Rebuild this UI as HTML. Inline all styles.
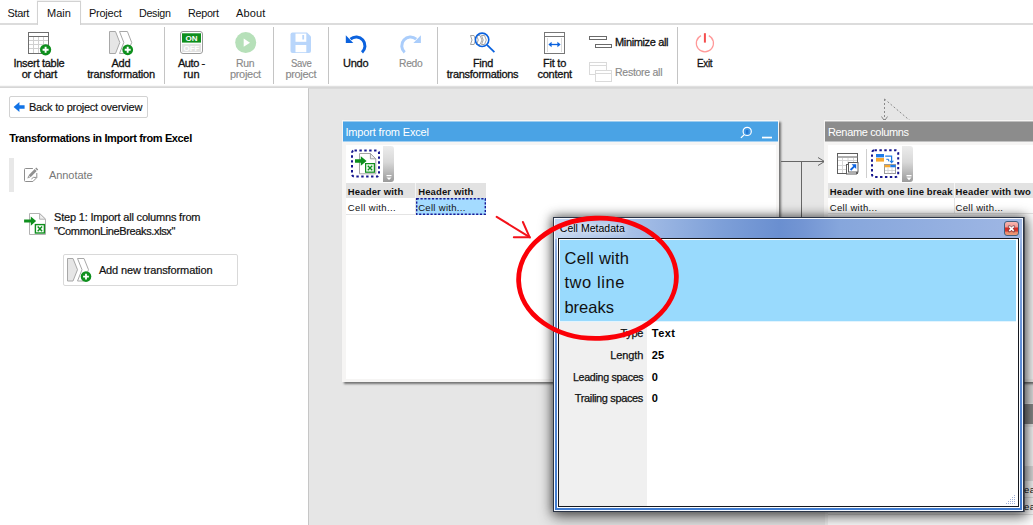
<!DOCTYPE html>
<html lang="en">
<head>
<meta charset="utf-8">
<title>Import from Excel - Cell Metadata</title>
<style>
html,body{margin:0;padding:0;}
body{width:1033px;height:525px;position:relative;overflow:hidden;background:#fff;font-family:"Liberation Sans",sans-serif;}
.a{position:absolute;box-sizing:border-box;}
.t{position:absolute;white-space:pre;font-family:"Liberation Sans",sans-serif;}
svg{position:absolute;left:0;top:0;overflow:visible;}
.sep{position:absolute;width:1px;top:27px;height:57px;background:#c4c4c4;}
</style>
</head>
<body>
<!-- ===== tab bar ===== -->
<div class="a" style="left:0;top:23px;width:1033px;height:2px;background:#dcdcdc;"></div>
<div class="a" style="left:37px;top:1px;width:44px;height:24px;background:#fff;border:1px solid #d2d2d2;border-bottom:none;box-shadow:0 -1px 1px rgba(0,0,0,.05);"></div>

<!-- ===== ribbon ===== -->
<div class="sep" style="left:164px;"></div>
<div class="sep" style="left:273px;"></div>
<div class="sep" style="left:328px;"></div>
<div class="sep" style="left:437px;"></div>
<div class="sep" style="left:677px;"></div>
<div class="a" style="left:0;top:85px;width:1033px;height:3px;background:linear-gradient(#f8f8f8 1px,#e0e0e0 1px,#e0e0e0 2px,#d6d6d6 2px);"></div>

<!-- ===== canvas ===== -->
<div class="a" style="left:308px;top:88px;width:725px;height:437px;background:#e6e6e6;border-left:1px solid #c6c6c6;border-top:1px solid #dadada;"></div>

<!-- ===== left panel ===== -->
<div class="a" style="left:9px;top:96px;width:139px;height:22px;border:1px solid #d2d2d2;border-radius:2px;background:#fff;"></div>
<div class="a" style="left:9px;top:158px;width:5px;height:34px;background:#e8e8e8;"></div>
<div class="a" style="left:63px;top:254px;width:175px;height:32px;border:1px solid #d9d9d9;border-radius:2px;background:#fff;"></div>

<!-- ===== Import from Excel window ===== -->
<div class="a" style="left:342px;top:120px;width:437px;height:262px;background:#f6f5f4;box-shadow:2px 2px 2px rgba(0,0,0,.5);"></div>
<div class="a" style="left:343px;top:121px;width:435px;height:21px;background:linear-gradient(#9ccbee 1px,#4aa3e5 1px,#4aa3e5 20px,#a3d0f2 20px);"></div>
<div class="a" style="left:346px;top:145px;width:430px;height:234px;background:#fff;"></div>
<!-- toolbar handle -->
<div class="a" style="left:383px;top:146px;width:11px;height:36px;border-radius:0 3px 3px 0;background:linear-gradient(#ececec,#d8d8d8 45%,#9a9a9a);"></div>
<!-- grid -->
<div class="a" style="left:346px;top:183px;width:140px;height:15px;background:#e2e2e2;"></div>
<div class="a" style="left:415px;top:183px;width:1px;height:15px;background:#f4f4f4;"></div>
<div class="a" style="left:346px;top:214px;width:140px;height:1px;background:#e4e4e4;"></div>
<div class="a" style="left:415px;top:198px;width:1px;height:16px;background:#e4e4e4;"></div>
<div class="a" style="left:416px;top:198px;width:70px;height:17px;background:#a4dbff;"></div>
<svg width="1033" height="525" viewBox="0 0 1033 525"><rect x="416.7" y="198.7" width="68.6" height="15.6" fill="none" stroke="#1a1a96" stroke-width="1.4" stroke-dasharray="2.2 1.6"/></svg>

<!-- ===== connectors ===== -->
<svg width="1033" height="525" viewBox="0 0 1033 525">
  <g fill="none" stroke="#666" stroke-width="1">
    <path d="M781 161.5H824"/>
    <path d="M818 157.5L824.5 161.5L818 165.5"/>
    <path d="M801.5 161.5V240"/>
  </g>
  <g fill="none" stroke="#8a8a8a" stroke-width="1" stroke-dasharray="2 2">
    <path d="M884.5 99V120"/>
    <path d="M884.5 99L911 121.5"/>
  </g>
  <path d="M881.5 116.5L884.5 121L887.5 116.5" fill="none" stroke="#8a8a8a" stroke-width="1"/>
</svg>

<!-- ===== Rename columns window ===== -->
<div class="a" style="left:824px;top:120px;width:221px;height:262px;background:#f6f5f4;box-shadow:2px 2px 2px rgba(0,0,0,.5);"></div>
<div class="a" style="left:825px;top:121px;width:220px;height:21px;background:linear-gradient(#bdbdbd 1px,#8c8c8c 1px,#8c8c8c 20px,#c2c2c2 20px);"></div>
<div class="a" style="left:828px;top:145px;width:215px;height:234px;background:#fff;"></div>
<div class="a" style="left:866px;top:149px;width:1px;height:29px;background:#cfcfcf;"></div>
<div class="a" style="left:902px;top:146px;width:11px;height:36px;border-radius:0 3px 3px 0;background:linear-gradient(#ececec,#d8d8d8 45%,#9a9a9a);"></div>
<div class="a" style="left:828px;top:183px;width:210px;height:15px;background:#e2e2e2;"></div>
<div class="a" style="left:954px;top:183px;width:1px;height:15px;background:#f4f4f4;"></div>
<div class="a" style="left:828px;top:213px;width:210px;height:1px;background:#e4e4e4;"></div>
<div class="a" style="left:954px;top:198px;width:1px;height:16px;background:#e4e4e4;"></div>
<!-- third window (mostly hidden behind the dialog) -->
<div class="a" style="left:825px;top:403px;width:220px;height:140px;background:#f1f1f1;"></div>
<div class="a" style="left:825px;top:404px;width:220px;height:20px;background:#8c8c8c;"></div>
<div class="a" style="left:828px;top:427px;width:215px;height:110px;background:#fff;"></div>
<div class="a" style="left:828px;top:466px;width:210px;height:15px;background:#e2e2e2;"></div>
<div class="a" style="left:828px;top:497px;width:210px;height:1px;background:#e4e4e4;"></div>
<div class="a" style="left:828px;top:514px;width:210px;height:1px;background:#e4e4e4;"></div>

<!-- ===== icons ===== -->
<svg width="1033" height="525" viewBox="0 0 1033 525">
<!-- tab/ribbon icons -->
<!-- Insert table -->
<g>
  <rect x="28.5" y="32.5" width="20" height="21" fill="#fff" stroke="#6e6e6e"/>
  <path d="M28.5 36.5H48.5" stroke="#6e6e6e" fill="none"/>
  <path d="M33.5 37V53M38.5 37V53M43.5 37V53M29 40.5H48M29 44.5H48M29 48.5H48" stroke="#d0d0d0" fill="none"/>
  <circle cx="45.6" cy="49.8" r="5.6" fill="#0e8f1d"/>
  <path d="M42.6 49.8H48.6M45.6 46.8V52.8" stroke="#fff" stroke-width="1.9" fill="none"/>
</g>
<!-- Add transformation -->
<g>
  <path d="M109.5 31.5H115.5L119.8 42.5L115.5 53.5H109.5Z" fill="#e6e6e6" stroke="#a8a8a8"/>
  <path d="M119.5 31.5H127.4L131.7 42.5L127.4 53.5H119.5L123.8 42.5Z" fill="#fff" stroke="#a8a8a8"/>
  <circle cx="127.7" cy="49.8" r="5.4" fill="#0e8f1d"/>
  <path d="M124.7 49.8H130.7M127.7 46.8V52.8" stroke="#fff" stroke-width="1.9" fill="none"/>
</g>
<!-- Auto-run -->
<g>
  <rect x="180.5" y="31.5" width="22" height="22" rx="2.5" fill="#fff" stroke="#9a9a9a"/>
  <rect x="182" y="33.3" width="19" height="9.3" fill="#0e8f1d"/>
  <rect x="182" y="43.9" width="19" height="8.1" fill="#e2e2e2"/>
  <text x="191.5" y="41.2" font-family="Liberation Sans, sans-serif" font-size="8" font-weight="700" fill="#fff" text-anchor="middle">ON</text>
  <text x="191.5" y="51" font-family="Liberation Sans, sans-serif" font-size="8" font-weight="700" fill="#fff" text-anchor="middle">OFF</text>
</g>
<!-- Run project -->
<g>
  <circle cx="245.7" cy="42.6" r="10.5" fill="#b6e0b9"/>
  <path d="M243.7 38.6V46.8L250 42.7Z" fill="#fff"/>
</g>
<!-- Save project -->
<g>
  <path d="M292.5 32.5H307L311 36.5V51Q311 53 309 53H292.5Q290.5 53 290.5 51V34.5Q290.5 32.5 292.5 32.5Z" fill="#b9d6fb"/>
  <rect x="295.5" y="33.6" width="10.8" height="8.2" fill="#fff"/>
  <rect x="302.3" y="35" width="1.8" height="4.5" fill="#b9d6fb"/>
  <rect x="295.5" y="45" width="10.8" height="7.2" fill="#fff"/>
</g>
<!-- Undo -->
<g>
  <path d="M350.5 39.2A8.3 8.3 0 1 1 362 52.3" fill="none" stroke="#0b62de" stroke-width="3"/>
  <path d="M345.8 35.2V42.9H353.3Z" fill="#0b62de"/>
</g>
<!-- Redo -->
<g>
  <path d="M416.2 39.2A8.3 8.3 0 1 0 404.7 52.3" fill="none" stroke="#aacdfb" stroke-width="3"/>
  <path d="M420.9 35.2V42.9H413.4Z" fill="#aacdfb"/>
</g>
<!-- Find transformations -->
<g>
  <path d="M470.5 35.5H474L475.5 40L474 44.5H470.5L472 40Z" fill="#fff" stroke="#9a9a9a" stroke-width="0.9"/>
  <path d="M476.5 35.5H480L482 40L480 44.5H476.5L478.3 40Z" fill="#fff" stroke="#9a9a9a" stroke-width="0.9"/>
  <path d="M481.5 35.5H484.5L486.3 40L484.5 44.5H481.5L483.2 40Z" fill="#fff" stroke="#9a9a9a" stroke-width="0.9"/>
  <circle cx="482.1" cy="39.8" r="6.7" fill="none" stroke="#0b62de" stroke-width="1.6"/>
  <path d="M487 44.9L494.4 52.2" stroke="#0b62de" stroke-width="1.8" fill="none"/>
</g>
<!-- Fit to content -->
<g>
  <rect x="544.5" y="32.5" width="20" height="21" fill="#fff" stroke="#777"/>
  <path d="M544.5 36.5H564.5" stroke="#777" fill="none"/>
  <path d="M547.5 38V52M561.5 38V52" stroke="#dcdcdc" fill="none"/>
  <path d="M549.5 44.5H559.5" stroke="#0b62de" stroke-width="1.3" fill="none"/>
  <path d="M551.6 41.8L548.4 44.5L551.6 47.2ZM557.4 41.8L560.6 44.5L557.4 47.2Z" fill="#0b62de"/>
</g>
<!-- Minimize all -->
<g fill="#fff" stroke="#6a6a6a">
  <rect x="589.5" y="36.5" width="17" height="3"/>
  <rect x="595.5" y="44.5" width="16" height="3"/>
</g>
<!-- Restore all -->
<g fill="#fff" stroke="#dadada">
  <rect x="589.5" y="62.5" width="17" height="12"/>
  <path d="M589.5 65.5H606.5" fill="none"/>
  <rect x="595.5" y="70.5" width="16" height="11"/>
  <path d="M595.5 73.5H611.5" fill="none"/>
</g>
<!-- Exit -->
<g fill="none">
  <path d="M701 35.6A8.6 8.6 0 1 0 708.8 35.6" stroke="#f99" stroke-width="1.2"/>
  <path d="M704.9 33.2V42.6" stroke="#f44d4d" stroke-width="2"/>
</g>
<!-- Back arrow -->
<path d="M13.6 107L19.4 102V105.2H24.6V108.8H19.4V112Z" fill="#1273e6"/>
<!-- Annotate -->
<g fill="none" stroke="#8e8e8e" stroke-width="1">
  <path d="M32.9 168.500H25.500Q24.500 168.500 24.500 169.500V180.500Q24.500 181.500 25.500 181.500H32.900L36.800 177.600V173"/>
  <path d="M31.400 179Q32.800 176.600 36.600 177.400"/>
</g>
<path d="M28.600 175.200L34.700 169.100L36.700 171.100L30.600 177.200Z" fill="#909090"/>
<path d="M27.300 178.400L28.300 175.600L30.200 177.500Z" fill="#a0a0a0"/>
<path d="M35.300 168.500L36.200 167.600L38.200 169.600L37.300 170.500Z" fill="#8a8a8a"/>
<!-- Step icon -->
<g>
  <path d="M29.500 213.500H39.600L45.500 219.200V234.500H29.500Z" fill="#fff" stroke="#b2b2b2"/>
  <path d="M39.600 213.500V219.200H45.500Z" fill="#f0f0f0" stroke="#b2b2b2"/>
  <path d="M24.100 219.600H30.800V216.600L36.100 221.100L30.800 225.800V222.600H24.100Z" fill="#0e8f1d"/>
  <rect x="35.400" y="224.600" width="9" height="8.400" fill="#fff" stroke="#0e8f1d" stroke-width="1.400"/>
  <path d="M37.700 226.600L42.100 231.200M42.100 226.600L37.700 231.200" stroke="#0e8f1d" stroke-width="1.500" fill="none"/>
</g>
<!-- Add new transformation button icon -->
<g>
  <path d="M67.5 258.5H73L77.5 269.7L73 281H67.5Z" fill="#e6e6e6" stroke="#a8a8a8"/>
  <path d="M77.5 258.5H84L88.5 269.7L84 281H77.5L82 269.7Z" fill="#fff" stroke="#a8a8a8"/>
  <circle cx="86" cy="276.600" r="5.3" fill="#0e8f1d"/>
  <path d="M83.1 276.600H88.9M86 273.700V279.500" stroke="#fff" stroke-width="1.8" fill="none"/>
</g>
<!-- Import window: title icons -->
<g fill="none" stroke="#fff" stroke-width="1.2">
  <circle cx="747.2" cy="131.4" r="4.1" fill="#3f96e2"/>
  <path d="M744.3 134.6L740.9 137.9" stroke-width="1.3"/>
</g>
<path d="M746 133.800V130.600Q747.200 129 748.400 130.600V133.800Z" fill="#2274d0"/>
<rect x="762" y="136.700" width="10" height="1.700" fill="#fff"/>
<!-- Import window: toolbar icon -->
<g>
  <rect x="352" y="150.400" width="27" height="26.200" rx="2.5" fill="none" stroke="#16168e" stroke-width="2" stroke-dasharray="2.4 2.5"/>
  <path d="M359.500 153.500H370.400L375.800 158.800V173.800H359.500Z" fill="#fff" stroke="#a4a4a4"/>
  <path d="M370.400 153.500V158.800H375.800Z" fill="#f0f0f0" stroke="#a4a4a4"/>
  <path d="M355 159.300H360.800V156.200L366.600 161L360.800 165.800V162.700H355Z" fill="#0e8f1d"/>
  <rect x="365.6" y="163.6" width="8.8" height="8.6" fill="#e9f6ea" stroke="#0e8f1d" stroke-width="1.2"/>
  <path d="M367.8 165.8L372.2 170.2M372.2 165.8L367.8 170.2" stroke="#0e8f1d" stroke-width="1.3" fill="none"/>
  <rect x="386.5" y="175" width="5" height="1.2" fill="#fff"/>
  <path d="M386.5 177.4H391.5L389 180Z" fill="#fff"/>
</g>
<!-- Rename window: toolbar icons -->
<g>
  <rect x="837.5" y="153.5" width="20" height="20" fill="#fff" stroke="#5e5e5e"/>
  <path d="M837.5 157H857.5" stroke="#8a8a8a" stroke-width="1.4" fill="none"/>
  <path d="M842.5 158V173M848 158V173M853.5 158V173M838 160.5H857M838 165.5H857M838 169.500H857" stroke="#d6d6d6" fill="none"/>
  <rect x="846.500" y="164.5" width="10" height="9.500" fill="#fff" stroke="#5e5e5e"/>
  <rect x="848.5" y="162.5" width="9.500" height="9.500" fill="#fff" stroke="#5e5e5e"/>
  <path d="M850.6 170L855.2 165.4" stroke="#0b62de" stroke-width="1.8" fill="none"/>
  <path d="M851.6 164.3H856.2V168.9Z" fill="#0b62de"/>
  <rect x="872" y="150.3" width="26.2" height="26.600" rx="2.5" fill="none" stroke="#16168e" stroke-width="2" stroke-dasharray="2.4 2.5"/>
  <rect x="876" y="154" width="8" height="3.4" fill="#1f7be6"/>
  <rect x="876" y="158" width="8" height="3.600" fill="#f8a830"/>
  <path d="M885.2 156.200H891.6V161.500" stroke="#1f7be6" stroke-width="1.2" fill="none"/>
  <path d="M889.2 160.800H894L891.6 163.600Z" fill="#1f7be6"/>
  <path d="M886.300 159.300H888.6V161.300" stroke="#1f7be6" stroke-width="1" fill="none"/>
  <rect x="884.5" y="164.5" width="11" height="9" fill="#fff" stroke="#9a9a9a"/>
  <rect x="884.5" y="165" width="5.800" height="2.300" fill="#f8a830"/>
  <rect x="890.300" y="165" width="5.400" height="2.300" fill="#1f7be6"/>
  <path d="M888 167.500V173.500M892 167.500V173.500M885 170.500H895" stroke="#cfcfcf" stroke-width="0.8" fill="none"/>
  <rect x="906.5" y="175" width="5" height="1.400" fill="#fff"/>
  <path d="M906.5 177.600H911.5L909 180.300Z" fill="#fff"/>
</g>

</svg>

<span class="t" style="left:7.60px;top:8px;font-size:11px;line-height:11px;letter-spacing:-0.359px;color:#111;">Start</span>
<span class="t" style="left:46.90px;top:8px;font-size:11px;line-height:11px;letter-spacing:0.085px;color:#111;">Main</span>
<span class="t" style="left:88.90px;top:8px;font-size:11px;line-height:11px;letter-spacing:-0.225px;color:#111;">Project</span>
<span class="t" style="left:139.00px;top:8px;font-size:11px;line-height:11px;letter-spacing:-0.300px;color:#111;transform:scaleX(0.974);transform-origin:0 0;">Design</span>
<span class="t" style="left:188.00px;top:8px;font-size:11px;line-height:11px;letter-spacing:-0.300px;color:#111;transform:scaleX(0.980);transform-origin:0 0;">Report</span>
<span class="t" style="left:235.90px;top:8px;font-size:11px;line-height:11px;letter-spacing:0.163px;color:#111;">About</span>
<span class="t" style="left:13.50px;top:58px;font-size:11px;line-height:11px;letter-spacing:-0.293px;color:#111;-webkit-text-stroke:0.3px #111;">Insert table</span>
<span class="t" style="left:21.70px;top:69px;font-size:11px;line-height:11px;letter-spacing:-0.242px;color:#111;-webkit-text-stroke:0.3px #111;">or chart</span>
<span class="t" style="left:111.50px;top:58px;font-size:11px;line-height:11px;letter-spacing:-0.289px;color:#111;-webkit-text-stroke:0.3px #111;">Add</span>
<span class="t" style="left:87.20px;top:69px;font-size:11px;line-height:11px;letter-spacing:-0.178px;color:#111;-webkit-text-stroke:0.3px #111;">transformation</span>
<span class="t" style="left:177.90px;top:58px;font-size:11px;line-height:11px;letter-spacing:-0.392px;color:#111;-webkit-text-stroke:0.3px #111;">Auto -</span>
<span class="t" style="left:183.40px;top:69px;font-size:11px;line-height:11px;letter-spacing:0.197px;color:#111;-webkit-text-stroke:0.3px #111;">run</span>
<span class="t" style="left:236.00px;top:58px;font-size:11px;line-height:11px;letter-spacing:-0.300px;color:#8a8a8a;-webkit-text-stroke:0.15px #8a8a8a;transform:scaleX(0.950);transform-origin:0 0;">Run</span>
<span class="t" style="left:229.90px;top:69px;font-size:11px;line-height:11px;letter-spacing:-0.289px;color:#8a8a8a;-webkit-text-stroke:0.15px #8a8a8a;">project</span>
<span class="t" style="left:290.70px;top:58px;font-size:11px;line-height:11px;letter-spacing:-0.300px;color:#8a8a8a;-webkit-text-stroke:0.15px #8a8a8a;transform:scaleX(0.864);transform-origin:0 0;">Save</span>
<span class="t" style="left:285.40px;top:69px;font-size:11px;line-height:11px;letter-spacing:-0.322px;color:#8a8a8a;-webkit-text-stroke:0.15px #8a8a8a;">project</span>
<span class="t" style="left:342.90px;top:58px;font-size:11px;line-height:11px;letter-spacing:-0.199px;color:#111;-webkit-text-stroke:0.3px #111;">Undo</span>
<span class="t" style="left:398.90px;top:58px;font-size:11px;line-height:11px;letter-spacing:-0.300px;color:#8a8a8a;-webkit-text-stroke:0.15px #8a8a8a;transform:scaleX(0.933);transform-origin:0 0;">Redo</span>
<span class="t" style="left:473.20px;top:58px;font-size:11px;line-height:11px;letter-spacing:-0.300px;color:#111;-webkit-text-stroke:0.3px #111;transform:scaleX(0.985);transform-origin:0 0;">Find</span>
<span class="t" style="left:446.80px;top:69px;font-size:11px;line-height:11px;letter-spacing:-0.287px;color:#111;-webkit-text-stroke:0.3px #111;">transformations</span>
<span class="t" style="left:543.10px;top:58px;font-size:11px;line-height:11px;letter-spacing:-0.251px;color:#111;-webkit-text-stroke:0.3px #111;">Fit to</span>
<span class="t" style="left:537.40px;top:69px;font-size:11px;line-height:11px;letter-spacing:-0.232px;color:#111;-webkit-text-stroke:0.3px #111;">content</span>
<span class="t" style="left:615.00px;top:37px;font-size:11px;line-height:11px;letter-spacing:-0.361px;color:#111;-webkit-text-stroke:0.3px #111;">Minimize all</span>
<span class="t" style="left:615.00px;top:67px;font-size:11px;line-height:11px;letter-spacing:-0.300px;color:#8a8a8a;-webkit-text-stroke:0.15px #8a8a8a;transform:scaleX(0.958);transform-origin:0 0;">Restore all</span>
<span class="t" style="left:697.30px;top:58px;font-size:11px;line-height:11px;letter-spacing:-0.300px;color:#111;-webkit-text-stroke:0.3px #111;transform:scaleX(0.894);transform-origin:0 0;">Exit</span>
<span class="t" style="left:28.90px;top:102px;font-size:11px;line-height:11px;letter-spacing:-0.249px;color:#111;-webkit-text-stroke:0.15px #111;">Back to project overview</span>
<span class="t" style="left:9.20px;top:133px;font-size:11px;line-height:11px;letter-spacing:-0.360px;color:#000;font-weight:700;">Transformations in Import from Excel</span>
<span class="t" style="left:48.90px;top:170px;font-size:11px;line-height:11px;letter-spacing:-0.050px;color:#777;">Annotate</span>
<span class="t" style="left:54.00px;top:212px;font-size:11px;line-height:11px;letter-spacing:-0.191px;color:#111;-webkit-text-stroke:0.2px #111;">Step 1: Import all columns from</span>
<span class="t" style="left:54.00px;top:226px;font-size:11px;line-height:11px;letter-spacing:-0.367px;color:#111;-webkit-text-stroke:0.2px #111;">&quot;CommonLineBreaks.xlsx&quot;</span>
<span class="t" style="left:98.90px;top:265px;font-size:11px;line-height:11px;letter-spacing:-0.122px;color:#111;-webkit-text-stroke:0.2px #111;">Add new transformation</span>
<span class="t" style="left:345.40px;top:127px;font-size:11px;line-height:11px;letter-spacing:-0.162px;color:#fff;">Import from Excel</span>
<span class="t" style="left:347.80px;top:187px;font-size:9.5px;line-height:9.5px;letter-spacing:0.154px;color:#111;font-weight:700;">Header with</span>
<span class="t" style="left:418.20px;top:187px;font-size:9.5px;line-height:9.5px;letter-spacing:0.134px;color:#111;font-weight:700;">Header with</span>
<span class="t" style="left:347.80px;top:203px;font-size:9.5px;line-height:9.5px;letter-spacing:0.370px;color:#111;">Cell with...</span>
<span class="t" style="left:418.20px;top:203px;font-size:9.5px;line-height:9.5px;letter-spacing:0.307px;color:#111;">Cell with...</span>
<span class="t" style="left:828.00px;top:127px;font-size:11px;line-height:11px;letter-spacing:-0.346px;color:#fff;">Rename columns</span>
<span class="t" style="left:829.80px;top:187px;font-size:9.5px;line-height:9.5px;letter-spacing:0.093px;color:#111;font-weight:700;">Header with one line break</span>
<span class="t" style="left:955.50px;top:187px;font-size:9.5px;line-height:9.5px;letter-spacing:0.175px;color:#111;font-weight:700;">Header with two</span>
<span class="t" style="left:829.80px;top:203px;font-size:9.5px;line-height:9.5px;letter-spacing:0.325px;color:#111;">Cell with...</span>
<span class="t" style="left:955.50px;top:203px;font-size:9.5px;line-height:9.5px;letter-spacing:0.334px;color:#111;">Cell with...</span>
<span class="t" style="left:1024.00px;top:485px;font-size:9.5px;line-height:9.5px;letter-spacing:0.586px;color:#111;">eak</span>
<span class="t" style="left:1024.00px;top:502px;font-size:9.5px;line-height:9.5px;letter-spacing:0.586px;color:#111;">eak</span>

<!-- ===== Cell Metadata dialog ===== -->
<div class="a" style="left:553px;top:217px;width:471px;height:295px;z-index:40;background:#2a3446;box-shadow:1px 0 0 rgba(25,30,40,.55),0 0 9px 1px rgba(0,0,0,.45),2px 4px 14px 2px rgba(0,0,0,.45);"></div>
<div class="a" style="left:554px;top:218px;width:469px;height:293px;z-index:41;background:#f4f8ff;"></div>
<div class="a" style="left:555px;top:219px;width:467px;height:291px;z-index:42;background:linear-gradient(#b4c8ea,#88a8de 12%,#5d8cd6 45%,#3f7bd0);"></div>
<div class="a" style="left:555px;top:219px;width:467px;height:20px;z-index:43;background:linear-gradient(90deg,#c4d6f0 0%,#aac2e8 15%,#7d9fd8 36%,#6a8fd0 48%,#7395d3 53%,#86a6dc 61%,#9fb7e4 100%);"></div>
<div class="a" style="left:557px;top:238px;width:463px;height:270px;z-index:44;background:#fdfeff;"></div>
<div class="a" style="left:558px;top:238px;width:461px;height:269px;z-index:45;background:#15181f;"></div>
<div class="a" style="left:559px;top:239px;width:459px;height:267px;z-index:46;background:#fff;"></div>
<div class="a" style="left:560px;top:240px;width:456px;height:82px;z-index:47;background:linear-gradient(#99dafd 81px,#e2f4fe 81px);"></div>
<div class="a" style="left:559px;top:322px;width:88px;height:184px;z-index:47;background:#f0f0f0;"></div>
<!-- close button -->
<div class="a" style="left:1004px;top:221px;width:15px;height:15px;z-index:48;border:1px solid #44607e;border-radius:3px;background:linear-gradient(#f8b6b0,#f39a94 38%,#d22a22 46%,#d63a2c 70%,#ea8a6a 78%,#ee9a78);"></div>
<svg width="1033" height="525" viewBox="0 0 1033 525" style="z-index:49">
  <path d="M1009.3 226.500L1013.7 230.900M1013.7 226.500L1009.300 230.900" stroke="#4a3a48" stroke-width="3" fill="none" stroke-linecap="round" opacity=".55"/><path d="M1009.3 226.500L1013.7 230.900M1013.700 226.500L1009.3 230.900" stroke="#fff" stroke-width="1.7" fill="none"/>
  <g fill="#9fb0d8">
    <rect x="1014" y="495" width="1" height="1"/><rect x="1012" y="497" width="1" height="1"/><rect x="1014" y="497" width="1" height="1"/>
    <rect x="1010" y="499" width="1" height="1"/><rect x="1012" y="499" width="1" height="1"/><rect x="1014" y="499" width="1" height="1"/>
    <rect x="1008" y="501" width="1" height="1"/><rect x="1010" y="501" width="1" height="1"/><rect x="1012" y="501" width="1" height="1"/><rect x="1014" y="501" width="1" height="1"/>
    <rect x="1006" y="503" width="1" height="1"/><rect x="1008" y="503" width="1" height="1"/><rect x="1010" y="503" width="1" height="1"/><rect x="1012" y="503" width="1" height="1"/><rect x="1014" y="503" width="1" height="1"/>
  </g>
</svg>
<span class="t" style="left:559.80px;top:223px;font-size:10.5px;line-height:10.5px;letter-spacing:0.017px;color:#000;z-index:50;text-shadow:0 0 5px rgba(255,255,255,.9),0 0 8px rgba(255,255,255,.7);">Cell Metadata</span>
<span class="t" style="left:564.60px;top:250px;font-size:16.5px;line-height:16.5px;letter-spacing:0.255px;color:#111;z-index:50;">Cell with</span>
<span class="t" style="left:564.40px;top:274px;font-size:16.5px;line-height:16.5px;letter-spacing:0.592px;color:#111;z-index:50;">two line</span>
<span class="t" style="left:564.40px;top:299px;font-size:16.5px;line-height:16.5px;letter-spacing:0.014px;color:#111;z-index:50;">breaks</span>
<span class="t" style="left:620.50px;top:328px;font-size:11px;line-height:11px;letter-spacing:-0.353px;color:#111;-webkit-text-stroke:0.25px #111;z-index:50;">Type</span>
<span class="t" style="left:610.20px;top:350px;font-size:11px;line-height:11px;letter-spacing:-0.111px;color:#111;-webkit-text-stroke:0.25px #111;z-index:50;">Length</span>
<span class="t" style="left:572.60px;top:372px;font-size:11px;line-height:11px;letter-spacing:-0.300px;color:#111;-webkit-text-stroke:0.25px #111;z-index:50;transform:scaleX(0.966);transform-origin:0 0;">Leading spaces</span>
<span class="t" style="left:574.80px;top:393px;font-size:11px;line-height:11px;letter-spacing:-0.363px;color:#111;-webkit-text-stroke:0.25px #111;z-index:50;">Trailing spaces</span>
<span class="t" style="left:651.80px;top:328px;font-size:11px;line-height:11px;letter-spacing:0.429px;color:#000;font-weight:700;z-index:50;">Text</span>
<span class="t" style="left:651.80px;top:350px;font-size:11px;line-height:11px;letter-spacing:0.050px;color:#000;font-weight:700;z-index:50;">25</span>
<span class="t" style="left:651.80px;top:372px;font-size:11px;line-height:11px;letter-spacing:0.000px;color:#000;font-weight:700;z-index:50;">0</span>
<span class="t" style="left:651.80px;top:393px;font-size:11px;line-height:11px;letter-spacing:0.000px;color:#000;font-weight:700;z-index:50;">0</span>

<!-- ===== red annotation ===== -->
<svg width="1033" height="525" viewBox="0 0 1033 525" style="z-index:60">
  <ellipse cx="597.5" cy="278.3" rx="78.9" ry="60.1" fill="none" stroke="#fb0007" stroke-width="4.8" transform="rotate(-2.2 597.5 278.3)"/>
  <g fill="none" stroke="#f3121a" stroke-width="2" stroke-linecap="round">
    <path d="M496.7 216.8L529.6 237.2"/>
    <path d="M522.9 222L529.6 237.2L513.8 237.2"/>
  </g>
</svg>
</body>
</html>
